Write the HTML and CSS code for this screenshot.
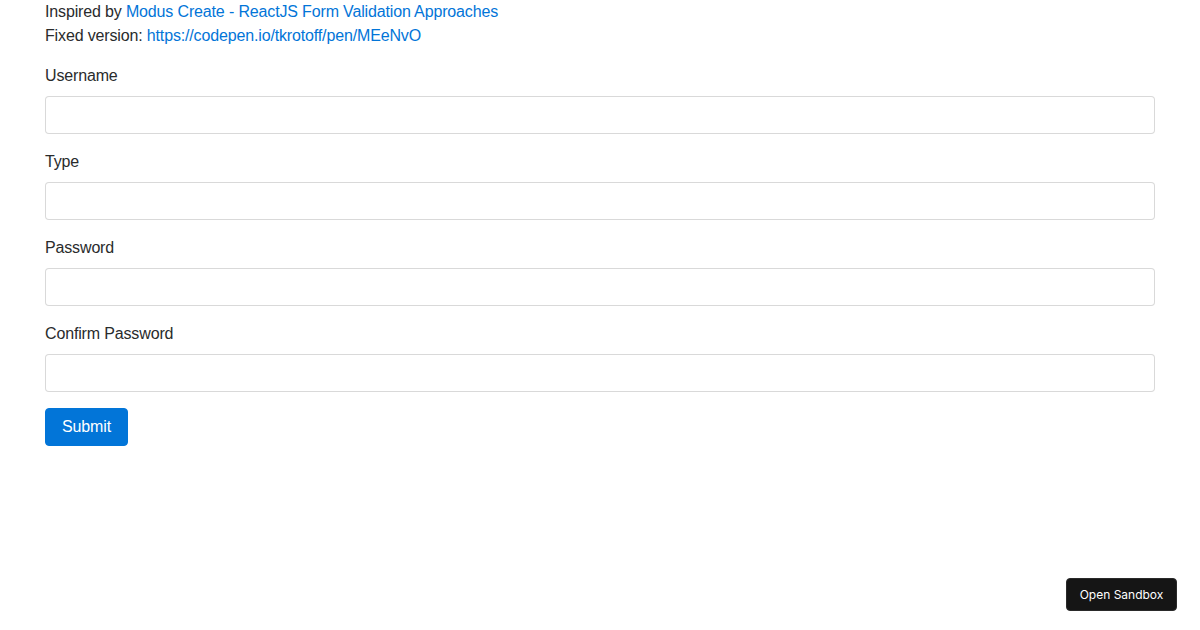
FILE: index.html
```html
<!DOCTYPE html>
<html>
<head>
<meta charset="utf-8">
<link rel="stylesheet" href="styles.css">
</head>
<body>
<div class="container">
  <p class="intro">Inspired by <a href="#">Modus Create - ReactJS Form Validation Approaches</a><br>Fixed version: <a href="#">https://codepen.io/tkrotoff/pen/MEeNvO</a></p>
  <form class="form">
    <div class="form-group">
      <label class="label">Username</label>
      <input class="input" type="text">
    </div>
    <div class="form-group">
      <label class="label">Type</label>
      <input class="input" type="text">
    </div>
    <div class="form-group">
      <label class="label">Password</label>
      <input class="input" type="password">
    </div>
    <div class="form-group">
      <label class="label">Confirm Password</label>
      <input class="input" type="password">
    </div>
    <button class="btn" type="button">Submit</button>
  </form>
</div>
<a class="sandbox" href="#">Open Sandbox</a>
</body>
</html>
```

FILE: styles.css
```css
html, body {
  margin: 0;
  padding: 0;
  background: #fff;
}
body {
  font-family: "Liberation Sans", Arial, sans-serif;
  font-size: 16px;
  line-height: 24px;
  color: #292b2c;
  letter-spacing: -0.15px;
}
.container {
  max-width: 1140px;
  margin: 0 auto;
  padding: 0 15px;
  box-sizing: border-box;
}
.intro {
  margin: 0 0 16px;
}
a {
  color: #0275d8;
  text-decoration: none;
}
.form {
  margin: 0;
}
.form-group {
  margin-bottom: 16px;
}
.label {
  display: block;
  margin-bottom: 8px;
}
.input {
  display: block;
  width: 100%;
  box-sizing: border-box;
  height: 38px;
  padding: 8px 12px;
  font-family: inherit;
  font-size: 16px;
  line-height: 20px;
  color: #464a4c;
  background: #fff;
  border: 1px solid rgba(0,0,0,.15);
  border-radius: 4px;
  margin: 0;
}
.btn {
  display: block;
  height: 38px;
  width: 83px;
  padding: 0;
  font-family: inherit;
  font-size: 16px;
  line-height: 24px;
  letter-spacing: -0.15px;
  color: #fff;
  background: #0275d8;
  border: 1px solid #0275d8;
  border-radius: 4px;
  cursor: pointer;
}
.sandbox {
  position: fixed;
  right: 23px;
  bottom: 19px;
  display: block;
  width: 111px;
  height: 33px;
  box-sizing: border-box;
  background: #151515;
  color: #fff;
  border: 1px solid #2a2a2a;
  border-radius: 4px;
  font-family: Inter, "Liberation Sans", sans-serif;
  font-size: 12px;
  line-height: 31px;
  letter-spacing: 0;
  text-align: center;
}
```
